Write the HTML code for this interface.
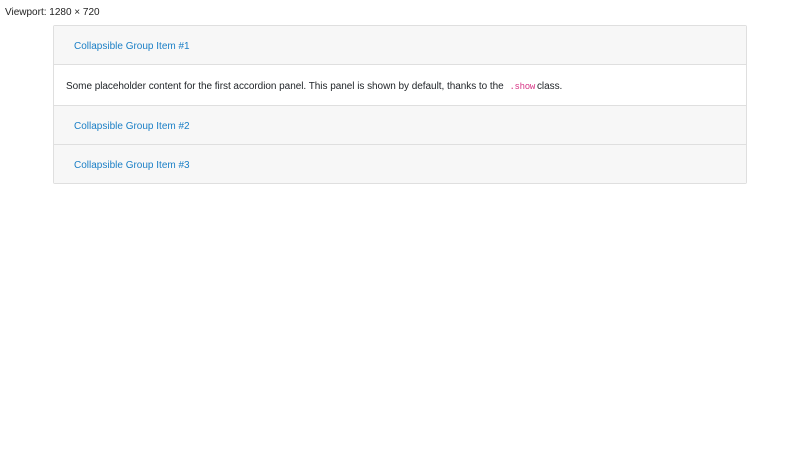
<!DOCTYPE html>
<html><head><style>
body{margin:0;background:#fff;font-family:"Liberation Sans",sans-serif;font-size:10px;color:#212529;width:800px;height:450px;position:relative}
.vp{position:absolute;left:5px;top:7px;font-size:10px;color:#222}
.acc{position:absolute;left:53px;top:25px;width:692px;border:1px solid #dfdfdf;border-radius:2px}
.h{height:36px;padding-top:2px;background:#f7f7f7;line-height:38px;padding-left:20px;color:#1a7fc6;border-bottom:1px solid #dfdfdf}
.b{height:38px;padding-top:2px;line-height:40px;padding-left:12px;border-bottom:1px solid #dfdfdf;background:#fff;letter-spacing:-0.04px}
.h:last-child{border-bottom:none}
code{font-family:"Liberation Mono",monospace;color:#d63384;font-size:9px;margin:0 2px 0 3px;letter-spacing:-0.3px}
</style></head><body>
<div class="vp">Viewport: 1280 × 720</div>
<div class="acc">
<div class="h">Collapsible Group Item #1</div>
<div class="b">Some placeholder content for the first accordion panel. This panel is shown by default, thanks to the <code>.show</code>class.</div>
<div class="h">Collapsible Group Item #2</div>
<div class="h">Collapsible Group Item #3</div>
</div>
</body></html>
